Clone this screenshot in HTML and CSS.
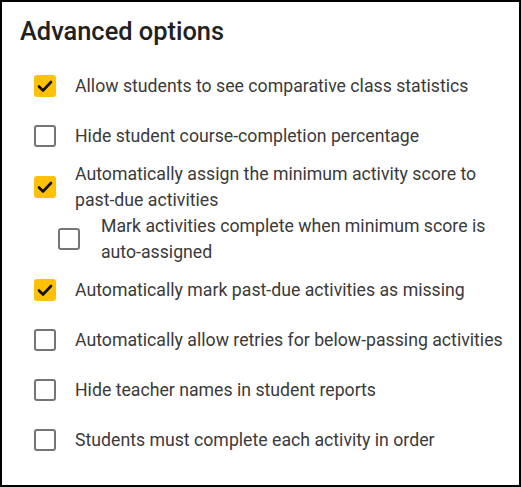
FILE: index.html
```html
<!DOCTYPE html>
<html lang="en">
<head>
<meta charset="utf-8">
<title>Advanced options</title>
<link rel="stylesheet" href="styles.css">
</head>
<body>
<section class="panel">
  <h2 class="title">Advanced options</h2>
  <ul class="options">
    <li class="option">
      <span class="box checked"><svg viewBox="0 0 22 22"><path d="M5 11.5l4 4l8-8.5"/></svg></span>
      <span class="label">Allow students to see comparative class statistics</span>
    </li>
    <li class="option">
      <span class="box"></span>
      <span class="label">Hide student course-completion percentage</span>
    </li>
    <li class="option">
      <span class="box checked"><svg viewBox="0 0 22 22"><path d="M5 11.5l4 4l8-8.5"/></svg></span>
      <span class="label">Automatically assign the minimum activity score to past-due activities</span>
    </li>
    <li class="option nested">
      <span class="box"></span>
      <span class="label">Mark activities complete when minimum score is auto-assigned</span>
    </li>
    <li class="option">
      <span class="box checked"><svg viewBox="0 0 22 22"><path d="M5 11.5l4 4l8-8.5"/></svg></span>
      <span class="label">Automatically mark past-due activities as missing</span>
    </li>
    <li class="option">
      <span class="box"></span>
      <span class="label">Automatically allow retries for below-passing activities</span>
    </li>
    <li class="option">
      <span class="box"></span>
      <span class="label">Hide teacher names in student reports</span>
    </li>
    <li class="option">
      <span class="box"></span>
      <span class="label">Students must complete each activity in order</span>
    </li>
  </ul>
</section>
</body>
</html>
```

FILE: styles.css
```css
html, body {
  margin: 0;
  padding: 0;
  background: #fff;
}

.panel {
  box-sizing: border-box;
  width: 521px;
  height: 487px;
  border: 2px solid #000;
  padding: 13px 4px 0 18px;
  font-family: Roboto, "Noto Sans", sans-serif;
  overflow: hidden;
}

.title {
  margin: 0 0 14px 0;
  font-size: 25.4px;
  line-height: 32px;
  font-weight: 500;
  color: #212121;
}

.options {
  list-style: none;
  margin: 0;
  padding: 0 0 0 14px;
}

.option {
  display: flex;
  align-items: center;
  gap: 19px;
  min-height: 50px;
}

.option.nested {
  padding-left: 24px;
  gap: 21px;
}

.box {
  flex: none;
  box-sizing: border-box;
  width: 22px;
  height: 22px;
  border: 2px solid #757575;
  border-radius: 3px;
  background: #fff;
  display: flex;
  align-items: center;
  justify-content: center;
}

.box.checked {
  border: none;
  background: #ffc107;
}

.box svg {
  width: 22px;
  height: 22px;
  display: block;
}

.box svg path {
  fill: none;
  stroke: #111;
  stroke-width: 2.6;
  stroke-linecap: round;
  stroke-linejoin: round;
}

.label {
  font-size: 17.7px;
  line-height: 26px;
  color: #3a3a3a;
}
```
